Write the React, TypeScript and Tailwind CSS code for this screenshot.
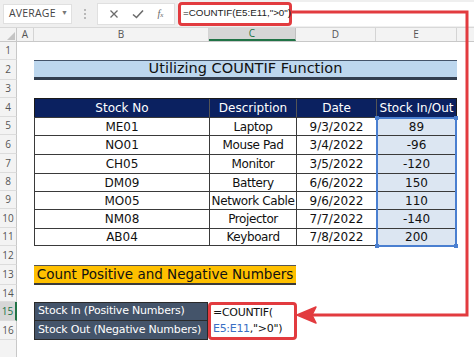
import React from "react";

const tf = { fontFamily: '"DejaVu Sans", "Noto Sans", sans-serif' };
const ui = { fontFamily: '"Open Sans", "Liberation Sans", sans-serif' };
const ls = { fontFamily: '"Liberation Sans", Arial, sans-serif' };

function RH({ n, h, sel }: { n: number | string; h: string; sel?: boolean }) {
  return (
    <div
      className={`w-[17px] shrink-0 ${h} flex items-center justify-center text-[10px] border-b border-[#dcdcdc] ${
        sel ? "bg-[#d6d6d6] text-[#217346] border-r-2 border-r-[#217346]" : "bg-[#f3f3f3] text-[#555] border-r border-r-[#c8c8c8]"
      }`}
      style={ui}
    >
      {n}
    </div>
  );
}

const data = [
  ["ME01", "Laptop", "9/3/2022", "89"],
  ["NO01", "Mouse Pad", "3/4/2022", "-96"],
  ["CH05", "Monitor", "3/5/2022", "-120"],
  ["DM09", "Battery", "6/6/2022", "150"],
  ["MO05", "Network Cable", "9/6/2022", "110"],
  ["NM08", "Projector", "7/7/2022", "-140"],
  ["AB04", "Keyboard", "7/8/2022", "200"],
];
const rowH = ["h-[18px]", "h-[19px]", "h-[19px]", "h-[18px]", "h-[18px]", "h-[19px]", "h-[18px]"];

export default function App() {
  return (
    <div className="relative w-[474px] h-[357px] overflow-hidden bg-white" style={tf}>
      {/* Formula bar */}
      <div className="h-[28px] bg-[#efefef] flex items-center gap-0 border-b border-[#d8d8d8]" style={ui}>
        <div className="ml-[3px] w-[69px] h-[20px] bg-white border border-[#e0e0e0] flex items-center justify-between pl-[5px] pr-[3px]">
          <span className="text-[10.5px] text-[#444] tracking-[0.2px]">AVERAGE</span>
          <span className="text-[7px] text-[#777]">▼</span>
        </div>
        <div className="w-[25px] flex justify-center">
          <div className="flex flex-col gap-[2px]">
            <span className="w-[2px] h-[2px] bg-[#b8b8b8]" />
            <span className="w-[2px] h-[2px] bg-[#b8b8b8]" />
            <span className="w-[2px] h-[2px] bg-[#b8b8b8]" />
          </div>
        </div>
        <div className="w-[78px] h-[22px] bg-white border border-[#e0e0e0] flex items-center justify-around px-[4px]">
          <svg width="10" height="10" viewBox="0 0 10 10">
            <path d="M1.5 1.5 L8.5 8.5 M8.5 1.5 L1.5 8.5" stroke="#6b6b6b" strokeWidth="1.3" />
          </svg>
          <svg width="12" height="10" viewBox="0 0 12 10">
            <path d="M1 5.5 L4.5 8.5 L11 1.5" stroke="#6b6b6b" strokeWidth="1.6" fill="none" />
          </svg>
          <span className="text-[10px] italic text-[#666]" style={{ fontFamily: '"Liberation Serif", serif' }}>
            f<span className="text-[7px]">x</span>
          </span>
        </div>
        <div className="ml-[3px] flex-1 h-[24px] bg-white flex items-center">
          <div className="w-[114px] h-[24px] rounded-[4px] border-[3px] border-[#e23b3f] flex items-center pl-[2px]">
            <span className="text-[9.8px] text-[#222] whitespace-nowrap" style={ls}>=COUNTIF(E5:E11,"&gt;0")</span>
          </div>
        </div>
      </div>

      {/* Column headers */}
      <div className="flex h-[14px] bg-[#f3f3f3] border-b border-[#c8c8c8] text-[10px] text-[#555]" style={ui}>
        <div className="w-[17px] shrink-0 border-r border-[#c8c8c8] relative">
          <svg className="absolute right-[1px] bottom-[1px]" width="8" height="8" viewBox="0 0 8 8">
            <path d="M8 0 L8 8 L0 8 Z" fill="#c4c4c4" />
          </svg>
        </div>
        <div className="w-[17px] shrink-0 border-r border-[#d4d4d4] flex items-center justify-center">A</div>
        <div className="w-[175px] shrink-0 border-r border-[#d4d4d4] flex items-center justify-center">B</div>
        <div className="w-[87px] shrink-0 bg-[#d6d6d6] border-b-2 border-[#217346] border-r border-r-[#c0c0c0] flex items-center justify-center text-[#217346]">C</div>
        <div className="w-[80px] shrink-0 border-r border-[#d4d4d4] flex items-center justify-center">D</div>
        <div className="w-[81px] shrink-0 border-r border-[#d4d4d4] flex items-center justify-center">E</div>
        <div className="flex-1" />
      </div>

      {/* Row 1 */}
      <div className="flex">
        <RH n={1} h="h-[18px]" />
      </div>
      {/* Row 2 title */}
      <div className="flex">
        <RH n={2} h="h-[20px]" />
        <div className="w-[17px]" />
        <div className="w-[423px] h-[20px] bg-[#bdd7ee] border-t border-[#44546a] border-b-[3px] border-b-[#333f50] flex items-center justify-center text-[14.5px] text-[#111]">
          Utilizing COUNTIF Function
        </div>
      </div>
      {/* Row 3 */}
      <div className="flex">
        <RH n={3} h="h-[18px]" />
      </div>
      {/* Row 4 header */}
      <div className="flex">
        <RH n={4} h="h-[19px]" />
        <div className="w-[17px]" />
        <div className="flex h-[19px] bg-[#0b2160] text-white text-[12px] border border-[#1a1a1a] border-b-0">
          <div className="w-[175px] flex items-center justify-center border-r border-[#555]">Stock No</div>
          <div className="w-[87px] flex items-center justify-center border-r border-[#555]">Description</div>
          <div className="w-[80px] flex items-center justify-center border-r border-[#555]">Date</div>
          <div className="w-[79px] flex items-center justify-center">Stock In/Out</div>
        </div>
      </div>
      {/* Data rows */}
      <div className="relative">
        {data.map((r, i) => (
          <div className="flex" key={i}>
            <RH n={5 + i} h={rowH[i]} />
            <div className="w-[17px]" />
            <div
              className={`flex ${rowH[i]} text-[12px] text-[#111] border-l border-r border-t border-[#3a3a3a] ${
                i === 6 ? "border-b" : ""
              }`}
            >
              <div className="w-[175px] flex items-center justify-center border-r border-[#3a3a3a]">{r[0]}</div>
              <div className="w-[87px] flex items-center justify-center border-r border-[#3a3a3a] whitespace-nowrap tracking-[-0.4px]">
                {r[1]}
              </div>
              <div className="w-[80px] flex items-center justify-center border-r border-[#3a3a3a]">{r[2]}</div>
              <div className="w-[79px] flex items-center justify-center bg-[#dce6f2]">{r[3]}</div>
            </div>
          </div>
        ))}
        {/* selection outline */}
        <div className="absolute left-[376px] top-0 w-[81px] h-[130px] border-2 border-[#4a7fd0] pointer-events-none">
          <span className="absolute -left-[3px] -top-[3px] w-[4px] h-[4px] bg-[#4a7fd0]" />
          <span className="absolute -right-[3px] -top-[3px] w-[4px] h-[4px] bg-[#4a7fd0]" />
          <span className="absolute -left-[3px] -bottom-[3px] w-[4px] h-[4px] bg-[#4a7fd0]" />
          <span className="absolute -right-[3px] -bottom-[3px] w-[4px] h-[4px] bg-[#4a7fd0]" />
        </div>
      </div>
      {/* Row 12 */}
      <div className="flex">
        <RH n={12} h="h-[19px]" />
      </div>
      {/* Row 13 yellow */}
      <div className="flex">
        <RH n={13} h="h-[20px]" />
        <div className="w-[17px]" />
        <div className="w-[262px] h-[20px] bg-[#ffc000] border-t border-[#555] border-b-2 border-b-[#3a3a3a] flex items-center justify-center text-[13.5px] text-[#111]">
          Count Positive and Negative Numbers
        </div>
      </div>
      {/* Row 14 */}
      <div className="flex">
        <RH n={14} h="h-[17px]" />
      </div>
      {/* Rows 15-16 */}
      <div className="flex">
        <div className="flex flex-col">
          <RH n={15} h="h-[19px]" sel />
          <RH n={16} h="h-[19px]" />
          <RH n="" h="h-[20px]" />
        </div>
        <div className="w-[17px]" />
        <div className="flex h-[38px]">
          <div className="w-[174px] flex flex-col bg-[#44546a] border border-[#2a2a2a] text-white text-[11px] tracking-[-0.2px]">
            <div className="h-[18px] flex items-center pl-[3px] border-b border-[#2a2a2a] whitespace-nowrap">Stock In (Positive Numbers)</div>
            <div className="flex-1 flex items-center pl-[3px] whitespace-nowrap">Stock Out (Negative Numbers)</div>
          </div>
          <div className="w-[89px] flex flex-col bg-white border-[3px] border-[#e23b3f] rounded-[4px] text-[11px] text-[#111] pl-[2px] tracking-[-0.3px]">
            <div className="h-[16px] flex items-center whitespace-nowrap">=COUNTIF(</div>
            <div className="flex-1 flex items-center whitespace-nowrap">
              <span className="text-[#3a6fc4]">E5:E11</span>,"&gt;0")
            </div>
          </div>
        </div>
      </div>

      {/* Arrow annotation */}
      <svg className="absolute left-0 top-0 pointer-events-none" width="474" height="357" viewBox="0 0 474 357">
        <path d="M292 12 L467 12 L467 315 L310 315" stroke="#e23b3f" strokeWidth="3" fill="none" />
        <path d="M297 315 L316 307 L312 315 L316 323 Z" fill="#e23b3f" stroke="#e23b3f" strokeWidth="1.5" strokeLinejoin="round" />
      </svg>
    </div>
  );
}
